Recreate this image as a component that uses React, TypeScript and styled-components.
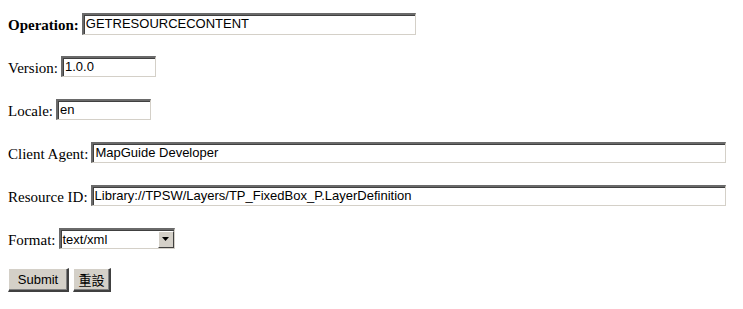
import styled, { createGlobalStyle } from "styled-components";

const GlobalStyle = createGlobalStyle`
  body {
    margin: 8px;
    background: #ffffff;
    font-family: "Liberation Serif", "Times New Roman", serif;
    font-size: 15px;
    color: #000000;
  }
`;

const fields = [
  { label: "Version:", value: "1.0.0", width: 95 },
  { label: "Locale:", value: "en", width: 95 },
  { label: "Client Agent:", value: "MapGuide Developer", width: 635 },
  { label: "Resource ID:", value: "Library://TPSW/Layers/TP_FixedBox_P.LayerDefinition", width: 635 },
];

export default function App() {
  return (
    <>
      <GlobalStyle />
      <Form onSubmit={(e) => e.preventDefault()}>
        <Row>
          <Label $bold>Operation:</Label>
          <TextBox $width={334} $tall defaultValue="GETRESOURCECONTENT" />
        </Row>
        {fields.map((f) => (
          <Row key={f.label}>
            <Label>{f.label}</Label>
            <TextBox $width={f.width} defaultValue={f.value} />
          </Row>
        ))}
        <Row>
          <Label>Format:</Label>
          <Select>
            <span>text/xml</span>
            <Arrow>
              <svg width="7" height="4" viewBox="0 0 7 4">
                <path d="M0 0h7L3.5 4z" fill="#000" />
              </svg>
            </Arrow>
          </Select>
        </Row>
        <Buttons>
          <Button type="submit" $width={61}>Submit</Button>
          <Button type="reset" $width={38}>重設</Button>
        </Buttons>
      </Form>
    </>
  );
}

const Form = styled.form`
  display: flex;
  flex-direction: column;
  gap: 20px;
  padding-top: 4px;
`;

const Row = styled.div`
  display: flex;
  align-items: center;
  gap: 3px;
  height: 23px;
`;

const Label = styled.span<{ $bold?: boolean }>`
  font-weight: ${(p) => (p.$bold ? 700 : 400)};
  white-space: nowrap;
  padding-top: 4px;
`;

const inset = `
  box-sizing: border-box;
  border-style: solid;
  border-width: 2px 1px 1px 2px;
  border-color: #6a6a6a #d4d0c8 #d4d0c8 #6a6a6a;
  box-shadow: inset 1px 1px 0 #404040;
`;

const TextBox = styled.input<{ $width: number; $tall?: boolean }>`
  ${inset}
  width: ${(p) => p.$width}px;
  height: ${(p) => (p.$tall ? 22 : 21)}px;
  padding: 0 2px 1px;
  font-family: "Liberation Sans", Arial, sans-serif;
  font-size: 13px;
  color: #000;
  background: #fff;
  outline: none;
`;

const Select = styled.div`
  ${inset}
  display: flex;
  align-items: center;
  justify-content: space-between;
  width: 116px;
  height: 21px;
  padding-left: 2px;
  font-family: "Liberation Sans", Arial, sans-serif;
  font-size: 13px;
  background: #fff;
`;

const Arrow = styled.div`
  display: flex;
  align-items: center;
  justify-content: center;
  box-sizing: border-box;
  width: 16px;
  height: 17px;
  background: #d4d0c8;
  border-style: solid;
  border-width: 1px;
  border-color: #ffffff #404040 #404040 #ffffff;
`;

const Buttons = styled.div`
  display: flex;
  align-items: center;
  gap: 4px;
  margin-top: -2px;
`;

const Button = styled.button<{ $width: number }>`
  box-sizing: border-box;
  width: ${(p) => p.$width}px;
  height: 24px;
  padding: 0;
  font-family: "Liberation Sans", Arial, "Noto Sans CJK TC", sans-serif;
  font-size: 13px;
  color: #000;
  background: #d4d0c8;
  border-style: solid;
  border-width: 1px 2px 2px 1px;
  border-color: #ffffff #404040 #404040 #ffffff;
  box-shadow: inset -1px -1px 0 #808080;
`;
